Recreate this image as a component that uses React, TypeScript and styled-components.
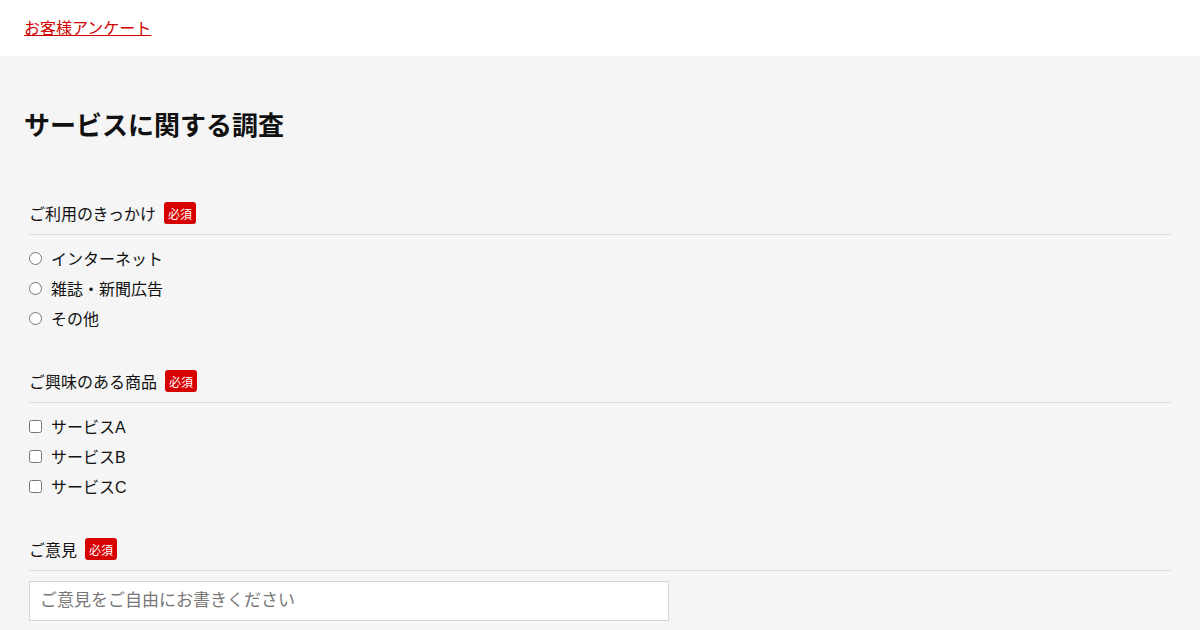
import React from 'react'
import styled, { createGlobalStyle } from 'styled-components'

const GlobalStyle = createGlobalStyle`
  html, body {
    margin: 0;
    padding: 0;
    background: #f4f5f4;
    font-family: "Liberation Sans", Arial, "Noto Sans CJK JP", sans-serif;
    color: #111;
  }
`

const radioOptions = ['インターネット', '雑誌・新聞広告', 'その他']
const checkOptions = ['サービスA', 'サービスB', 'サービスC']

const App: React.FC = () => {
  return (
    <>
      <GlobalStyle />
      <Header>
        <HomeLink href="#">お客様アンケート</HomeLink>
      </Header>
      <Main>
        <Title>サービスに関する調査</Title>

        <Section>
          <QuestionRow>
            <QuestionText>ご利用のきっかけ</QuestionText>
            <Required>必須</Required>
          </QuestionRow>
          <OptionList>
            {radioOptions.map((opt) => (
              <OptionRow key={opt}>
                <Choice type="radio" name="trigger" />
                <span>{opt}</span>
              </OptionRow>
            ))}
          </OptionList>
        </Section>

        <Section>
          <QuestionRow>
            <QuestionText>ご興味のある商品</QuestionText>
            <Required>必須</Required>
          </QuestionRow>
          <OptionList>
            {checkOptions.map((opt) => (
              <OptionRow key={opt}>
                <Choice type="checkbox" />
                <span>{opt}</span>
              </OptionRow>
            ))}
          </OptionList>
        </Section>

        <Section>
          <QuestionRow>
            <QuestionText>ご意見</QuestionText>
            <Required>必須</Required>
          </QuestionRow>
          <TextInput placeholder="ご意見をご自由にお書きください" />
        </Section>
      </Main>
    </>
  )
}

const Header = styled.header`
  height: 56px;
  background: #fff;
  display: flex;
  align-items: center;
  padding: 0 24px 3px;
  box-sizing: border-box;
`
const HomeLink = styled.a`
  font-size: 16px;
  color: #d20000;
  text-decoration: underline;
`
const Main = styled.main`
  display: flex;
  flex-direction: column;
  padding: 52px 24px 0;
`
const Title = styled.h1`
  margin: 0 0 22px;
  font-size: 26px;
  line-height: 36px;
  font-weight: bold;
  color: #111;
`
const Section = styled.section`
  padding: 0 5px;
  margin-top: 36px;
  & + & {
    margin-top: 37px;
  }
`
const QuestionRow = styled.div`
  display: flex;
  align-items: center;
  gap: 8px;
  height: 22px;
  padding-bottom: 10px;
  border-bottom: 1px solid #dcdcdc;
`
const QuestionText = styled.span`
  font-size: 16px;
  color: #111;
`
const Required = styled.span`
  display: inline-flex;
  align-items: center;
  height: 22px;
  padding: 0 4px;
  border-radius: 3px;
  background: #d70000;
  color: #fff;
  font-size: 12px;
`
const OptionList = styled.div`
  padding-top: 8px;
`
const OptionRow = styled.label`
  display: flex;
  align-items: center;
  gap: 9px;
  height: 30px;
  font-size: 16px;
  color: #111;
`
const Choice = styled.input`
  margin: 0;
  width: 13px;
  height: 13px;
`
const TextInput = styled.input`
  display: block;
  box-sizing: border-box;
  margin-top: 10px;
  width: 640px;
  height: 40px;
  padding: 0 10px;
  border: 1px solid #d6d6d6;
  background: #fff;
  font-family: inherit;
  font-size: 17px;
  outline: none;
  &::placeholder {
    color: #777;
  }
`

export default App
